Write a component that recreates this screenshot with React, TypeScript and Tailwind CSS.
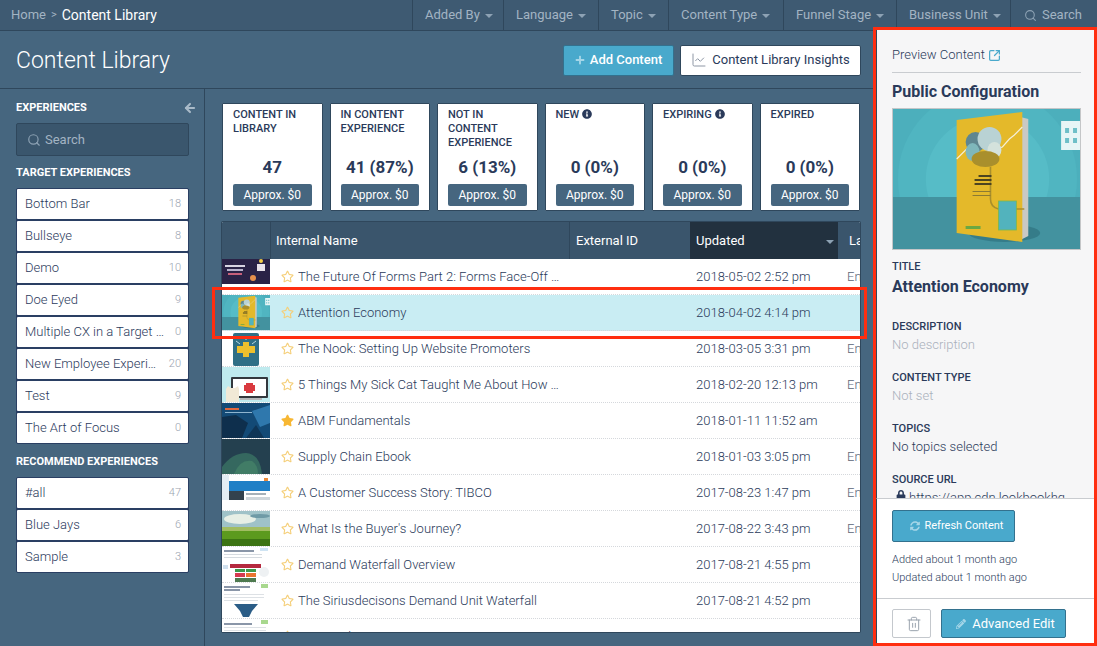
import { FC, ReactNode } from "react";
import { ArrowLeft, ChartLine, Search, SquareArrowOutUpRight, Trash2 } from "lucide-react";
import { FaInfoCircle, FaLock, FaPencilAlt, FaPlus, FaRegStar, FaStar, FaSyncAlt } from "react-icons/fa";

const filters = [
	{ label: "Added By", width: "w-[91px]" },
	{ label: "Language", width: "w-[95px]" },
	{ label: "Topic", width: "w-[70px]" },
	{ label: "Content Type", width: "w-[115px]" },
	{ label: "Funnel Stage", width: "w-[113px]" },
	{ label: "Business Unit", width: "w-[114px]" },
];

const stats = [
	{ title: "Content in Library", value: "47" },
	{ title: "In Content Experience", value: "41 (87%)" },
	{ title: "Not in Content Experience", value: "6 (13%)" },
	{ title: "New", value: "0 (0%)", info: true },
	{ title: "Expiring", value: "0 (0%)", info: true },
	{ title: "Expired", value: "0 (0%)" },
];

const target = [
	{ name: "Bottom Bar", count: 18 },
	{ name: "Bullseye", count: 8 },
	{ name: "Demo", count: 10 },
	{ name: "Doe Eyed", count: 9 },
	{ name: "Multiple CX in a Target Experience", count: 0 },
	{ name: "New Employee Experience", count: 20 },
	{ name: "Test", count: 9 },
	{ name: "The Art of Focus", count: 0 },
];

const recommend = [
	{ name: "#all", count: 47 },
	{ name: "Blue Jays", count: 6 },
	{ name: "Sample", count: 3 },
];

const BookCover: FC<{ className?: string }> = ({ className }) => (
	<svg viewBox="0 0 188 140" preserveAspectRatio="none" className={className}>
		<rect width="188" height="140" fill="#4cafbc" />
		<circle cx="95" cy="70" r="90" fill="#50b5c1" />
		<circle cx="95" cy="70" r="62" fill="#56bcc7" />
		<rect y="88" width="188" height="52" fill="#43929f" />
		<ellipse cx="112" cy="124" rx="36" ry="9" fill="#2f7480" opacity="0.7" />
		<path d="M128 8 L136 10 L136 127 L128 131 Z" fill="#c9c9c4" />
		<path d="M64 11 L130 3 L130 133 L64 124 Z" fill="#e4b92a" />
		<path d="M64 50 L76 38 L84 46 L110 38 L117 30 L122 26 L130 18" fill="none" stroke="#f4efd8" strokeWidth="1.2" />
		<ellipse cx="83" cy="33" rx="10" ry="10" fill="#5f8690" />
		<ellipse cx="97" cy="30" rx="12" ry="12" fill="#b9d2d4" />
		<ellipse cx="80" cy="43" rx="7" ry="9" fill="#7fb7bb" />
		<ellipse cx="102" cy="41" rx="7" ry="8" fill="#d4e2dc" />
		<ellipse cx="93" cy="50" rx="14" ry="8" fill="#a98f2c" />
		<path d="M98 58 V90 Q98 98 106 100 H132" fill="none" stroke="#a98f2c" strokeWidth="1.6" />
		<rect x="86" y="66" width="13" height="2" fill="#4d4420" />
		<rect x="82" y="70" width="17" height="2" fill="#4d4420" />
		<rect x="82" y="74" width="17" height="2" fill="#4d4420" />
		<rect x="80" y="82" width="18" height="1" fill="#8b7a33" />
		<rect x="80" y="86" width="18" height="1" fill="#8b7a33" />
		<rect x="106" y="92" width="18" height="29" fill="#52b3bd" stroke="#79b84e" strokeWidth="0.8" />
		<rect x="73" y="117" width="15" height="3" fill="#6aa842" />
		<rect x="169" y="12" width="19" height="29" fill="#e6f5f6" />
		<rect x="173" y="19" width="4" height="5" fill="#6dbfc8" />
		<rect x="181" y="19" width="4" height="5" fill="#6dbfc8" />
		<rect x="173" y="29" width="4" height="5" fill="#6dbfc8" />
		<rect x="181" y="29" width="4" height="5" fill="#6dbfc8" />
	</svg>
);

const Thumb: FC<{ kind: string }> = ({ kind }) => {
	if (kind === "book") return <BookCover className="h-full w-full blur-[0.3px]" />;
	return (
		<svg viewBox="0 0 48 35" preserveAspectRatio="none" className="h-full w-full blur-[0.3px]">
			{kind === "forms" && (
				<g>
					<rect width="48" height="25" fill="#2a2246" />
					<rect y="25" width="48" height="10" fill="#ffffff" />
					<rect x="3" y="6" width="20" height="2" fill="#d8d4e2" />
					<rect x="5" y="10" width="16" height="2" fill="#b8b2cc" />
					<rect x="6" y="14" width="14" height="2" fill="#c75f7a" />
					<rect x="35" y="5" width="8" height="7" fill="#e9e3ea" />
					<circle cx="39" cy="2" r="2" fill="#f3cd45" />
					<circle cx="31" cy="19" r="3" fill="#e58f4c" />
				</g>
			)}
			{kind === "nook" && (
				<g>
					<rect width="48" height="35" fill="#ffffff" />
					<rect x="11" y="2" width="26" height="33" rx="2" fill="#2f6f86" />
					<rect x="15" y="15" width="18" height="7" fill="#edc02d" />
					<rect x="21" y="11" width="6" height="15" fill="#edc02d" />
					<path d="M14 10 L18 13 M24 5 V9 M34 10 L30 13" stroke="#b9dbe3" strokeWidth="1" />
				</g>
			)}
			{kind === "cat" && (
				<g>
					<rect width="48" height="35" fill="#bfeaee" />
					<rect x="9" y="10" width="37" height="21" rx="1" fill="#33383d" />
					<rect x="11" y="12" width="33" height="17" fill="#ffffff" />
					<rect x="24" y="16" width="7" height="10" fill="#d93a3f" />
					<rect x="22" y="18" width="11" height="6" fill="#d93a3f" />
					<rect x="18" y="31" width="22" height="2" fill="#b5b8ba" />
					<path d="M4 35 V22 L6 19 L9 21 H13 L16 19 L17 22 V35 Z" fill="#f1e9d6" />
				</g>
			)}
			{kind === "abm" && (
				<g>
					<rect width="48" height="35" fill="#134a76" />
					<path d="M0 35 V14 L14 12 L26 20 L20 35 Z" fill="#0e2f4d" />
					<path d="M30 8 L48 2 V20 L38 24 Z" fill="#2f78ad" />
					<path d="M24 35 L34 22 L42 35 Z" fill="#0f3556" />
					<rect x="3" y="5" width="14" height="2" fill="#e0663c" />
					<rect x="3" y="9" width="27" height="1" fill="#8fb5cf" />
				</g>
			)}
			{kind === "supply" && (
				<g>
					<rect width="48" height="35" fill="#24404f" />
					<path d="M0 35 V28 Q10 14 24 14 Q38 15 40 35 Z" fill="#35685f" />
					<path d="M12 35 Q18 20 30 22 Q36 26 36 35 Z" fill="#417c66" />
				</g>
			)}
			{kind === "tibco" && (
				<g>
					<rect width="48" height="35" fill="#ffffff" />
					<rect width="7" height="25" fill="#e3edf4" />
					<rect x="7" y="6" width="41" height="10" fill="#1f7fc6" />
					<rect x="7" y="16" width="15" height="9" fill="#33424e" />
					<rect x="24" y="18" width="20" height="2" fill="#a6b0b8" />
					<rect x="24" y="22" width="24" height="3" fill="#cfd6db" />
					<rect x="42" y="3" width="4" height="3" fill="#ea8a3a" />
				</g>
			)}
			{kind === "field" && (
				<g>
					<rect width="48" height="35" fill="#9fc2c8" />
					<ellipse cx="18" cy="8" rx="16" ry="5" fill="#e7efe6" />
					<ellipse cx="38" cy="5" rx="10" ry="2" fill="#6f9aa6" />
					<rect y="16" width="48" height="19" fill="#5c9a1e" />
					<rect y="16" width="48" height="4" fill="#a2bd62" />
					<rect y="28" width="48" height="7" fill="#3c7413" />
				</g>
			)}
			{kind === "waterfall" && (
				<g>
					<rect width="48" height="35" fill="#ffffff" />
					<rect x="2" y="3" width="30" height="2" fill="#8a96a8" />
					<rect x="2" y="7" width="38" height="1" fill="#d6dbe0" />
					<rect x="2" y="10" width="38" height="1" fill="#d6dbe0" />
					<rect x="8" y="17" width="31" height="4" fill="#b5293f" />
					<rect x="13" y="22" width="10" height="3" fill="#3c9a4c" />
					<rect x="24" y="22" width="10" height="3" fill="#3c9a4c" />
					<rect x="13" y="26" width="10" height="4" fill="#d53a4f" />
					<rect x="24" y="26" width="10" height="4" fill="#e8742f" />
					<rect x="13" y="31" width="21" height="4" fill="#4e7a4f" />
					<rect x="1" y="18" width="5" height="4" fill="#cfe0ee" />
					<circle cx="42" cy="25" r="5" fill="#eef1f3" />
					<rect x="38" y="1" width="8" height="3" fill="#cfe4f3" />
				</g>
			)}
			{kind === "funnel" && (
				<g>
					<rect width="48" height="35" fill="#ffffff" />
					<rect x="2" y="3" width="26" height="2" fill="#8a96a8" />
					<rect x="2" y="6" width="16" height="2" fill="#8a96a8" />
					<rect x="2" y="11" width="40" height="1" fill="#dde1e5" />
					<rect x="2" y="14" width="40" height="1" fill="#dde1e5" />
					<rect x="2" y="17" width="34" height="1" fill="#dde1e5" />
					<path d="M12 21 H36 L30 28 L27 34 H21 L18 28 Z" fill="#2b5d87" />
					<rect x="39" y="1" width="7" height="4" fill="#a8d88e" />
				</g>
			)}
			{kind === "screen" && (
				<g>
					<rect width="48" height="35" fill="#ffffff" />
					<rect x="2" y="4" width="28" height="2" fill="#8a96a8" />
					<rect x="2" y="8" width="42" height="1" fill="#dde1e5" />
					<rect x="2" y="11" width="42" height="1" fill="#dde1e5" />
					<rect x="39" y="1" width="7" height="4" fill="#a8d88e" />
				</g>
			)}
		</svg>
	);
};

const rows = [
	{ thumb: "forms", title: "The Future Of Forms Part 2: Forms Face-Off With Experts", date: "2018-05-02 2:52 pm", lang: true },
	{ thumb: "book", title: "Attention Economy", date: "2018-04-02 4:14 pm", selected: true },
	{ thumb: "nook", title: "The Nook: Setting Up Website Promoters", date: "2018-03-05 3:31 pm", lang: true },
	{ thumb: "cat", title: "5 Things My Sick Cat Taught Me About How To Market", date: "2018-02-20 12:13 pm", lang: true },
	{ thumb: "abm", title: "ABM Fundamentals", date: "2018-01-11 11:52 am", starred: true },
	{ thumb: "supply", title: "Supply Chain Ebook", date: "2018-01-03 3:05 pm", lang: true },
	{ thumb: "tibco", title: "A Customer Success Story: TIBCO", date: "2017-08-23 1:47 pm", lang: true },
	{ thumb: "field", title: "What Is the Buyer's Journey?", date: "2017-08-22 3:43 pm", lang: true },
	{ thumb: "waterfall", title: "Demand Waterfall Overview", date: "2017-08-21 4:55 pm" },
	{ thumb: "funnel", title: "The Siriusdecisons Demand Unit Waterfall", date: "2017-08-21 4:52 pm" },
	{ thumb: "screen", title: "Screen Shot 2017-08-21 At 1.52.50 PM", date: "2017-08-21 4:51 pm" },
];

const Caret = () => <span className="ml-[5px] inline-block h-0 w-0 translate-y-[1px] border-x-[4px] border-t-[4px] border-x-transparent border-t-[#8da2b4]" />;

const SideList: FC<{ items: { name: string; count: number }[] }> = ({ items }) => (
	<div className="flex flex-col gap-[2px] rounded-[2px] border border-[#2a3f63] bg-[#2a3f63]">
		{items.map((item) => (
			<div key={item.name} className="flex h-[30px] items-center justify-between rounded-[1px] bg-white pl-[8px] pr-[7px] text-[13px] font-light text-[#2b3a5c]">
				<span className="truncate">{item.name}</span>
				<span className="ml-2 text-[11px] text-[#9aa3b0]">{item.count}</span>
			</div>
		))}
	</div>
);

const Field: FC<{ label: string; children: ReactNode }> = ({ label, children }) => (
	<div className="mb-[15px]">
		<div className="h-[16px] text-[11px] font-medium uppercase leading-[16px] text-[#2a3a5a]">{label}</div>
		{children}
	</div>
);

export default function App() {
	return (
		<div className="relative flex h-[646px] w-[1097px] flex-col overflow-hidden bg-[#46667f] font-['Roboto',sans-serif]">
			<div className="flex h-[31px] shrink-0 items-center border-b border-[#2f475c] bg-[#3e5a72] text-[13px] text-[#a3b4c3]">
				<div className="flex items-center pl-[11px]">
					<span>Home</span>
					<span className="mx-[5px] text-[11px]">&gt;</span>
					<span className="text-[14px] text-white">Content Library</span>
				</div>
				<div className="ml-auto flex h-full">
					{filters.map((f) => (
						<div key={f.label} className={`flex items-center border-l border-[#2f475c] pl-[12px] ${f.width}`}>
							{f.label}
							<Caret />
						</div>
					))}
					<div className="flex w-[87px] items-center gap-[5px] border-l border-[#2f475c] pl-[13px]">
						<Search size={13} className="text-[#8da2b4]" />
						Search
					</div>
				</div>
			</div>

			<div className="flex h-[58px] shrink-0 items-center border-b border-[#2f475c] pl-[16px] pr-[236px]">
				<h1 className="mt-[3px] text-[23px] font-light text-white">Content Library</h1>
				<div className="ml-auto mt-[1px] flex gap-[6px]">
					<button className="flex h-[31px] w-[111px] items-center justify-center gap-[5px] rounded-[2px] border border-[#33718e] bg-[#49a9cc] text-[13px] font-medium text-white">
						<FaPlus size={10} className="text-[#a5d6e8]" />
						Add Content
					</button>
					<button className="flex h-[31px] w-[181px] items-center justify-center gap-[5px] rounded-[2px] border border-[#2f475c] bg-white text-[13px] text-[#2a3a5a]">
						<ChartLine size={16} strokeWidth={1.5} className="text-[#8e97a5]" />
						Content Library Insights
					</button>
				</div>
			</div>

			<div className="flex min-h-0 flex-1">
				<aside className="w-[205px] shrink-0 border-r border-[#2f475c] pl-[16px] pr-[15px] pt-[11px]">
					<div className="flex h-[16px] items-center justify-between">
						<span className="text-[11px] font-bold uppercase text-white">Experiences</span>
						<ArrowLeft size={14} strokeWidth={3.5} className="-mr-[8px] text-[#a9bac8]" />
					</div>
					<div className="mt-[7px] flex h-[33px] items-center gap-[4px] rounded-[2px] border border-[#2f475c] bg-[#3a566d] pl-[10px] text-[13px] text-[#a3b4c3]">
						<Search size={14} className="text-[#8da2b4]" />
						Search
					</div>
					<div className="mb-[7px] mt-[9px] h-[16px] text-[11px] font-bold uppercase leading-[16px] text-white">Target Experiences</div>
					<SideList items={target} />
					<div className="mb-[7px] mt-[10px] h-[16px] text-[11px] font-bold uppercase leading-[16px] text-white">Recommend Experiences</div>
					<SideList items={recommend} />
				</aside>

				<main className="w-[655px] shrink-0 pl-[17px] pt-[14px]">
					<div className="flex h-[108px] gap-[7px]">
						{stats.map((s) => (
							<div key={s.title} className="flex min-w-0 flex-1 flex-col rounded-[1px] border border-[#2f475c] bg-white px-[10px] pb-[4px] pt-[4px]">
								<div className="h-[44px] text-[11px] font-medium uppercase leading-[14px] text-[#2a3a5a]">
									{s.title}
									{s.info && <FaInfoCircle size={10} className="ml-[3px] inline-block align-[-1px]" />}
								</div>
								<div className="mt-auto whitespace-nowrap text-center text-[17px] font-bold leading-[24px] text-[#2a3a5a]">{s.value}</div>
								<div className="mt-[5px] flex h-[22px] items-center justify-center rounded-[2px] bg-[#46667f] text-[12px] font-normal text-white">Approx. $0</div>
							</div>
						))}
					</div>

					<div className="mt-[11px] h-[410px] overflow-hidden rounded-[1px] bg-white text-[13px] font-light text-[#2a3a5a] shadow-[0_0_0_1px_#2f475c]">
						<div className="flex h-[37px] bg-[#3a556c] text-white">
							<div className="w-[49px] shrink-0 border-r border-[#2f475c]" />
							<div className="flex w-[299px] shrink-0 items-center border-r border-[#2f475c] pl-[5px] font-normal">Internal Name</div>
							<div className="flex w-[120px] shrink-0 items-center pl-[6px] font-normal">External ID</div>
							<div className="flex w-[148px] shrink-0 items-center justify-between bg-[#22313f] pl-[6px] pr-[4px] font-normal">
								Updated
								<Caret />
							</div>
							<div className="flex flex-1 items-center overflow-hidden pl-[11px] font-normal">Language</div>
						</div>
						{rows.map((r) => (
							<div key={r.title} className={`flex h-[36px] items-stretch border-b border-dotted border-[#d5d8dc] ${r.selected ? "bg-[#c9edf3]" : "bg-white"}`}>
								<div className="h-[35px] w-[48px] shrink-0 overflow-hidden">
									<Thumb kind={r.thumb} />
								</div>
								<div className="flex w-[300px] shrink-0 items-center pl-[11px]">
									{r.starred ? <FaStar size={13} className="shrink-0 text-[#f7b733]" /> : <FaRegStar size={13} className="shrink-0 text-[#f5cf79]" />}
									<span className="ml-[4px] w-[264px] truncate">{r.title}</span>
								</div>
								<div className="w-[120px] shrink-0" />
								<div className="flex w-[148px] shrink-0 items-center pl-[6px]">{r.date}</div>
								<div className="flex flex-1 items-center overflow-hidden whitespace-nowrap pl-[9px] text-[#5a6577]">{r.lang ? "English" : ""}</div>
							</div>
						))}
					</div>
				</main>
			</div>

			{/* preview drawer lies over the page */}
			<div className="absolute left-[873px] top-[27px] flex h-[619px] w-[224px] flex-col border-[3px] border-[#ff2e10] bg-[#f6f6f7] text-[#2a3a5a]">
				<div className="min-h-0 flex-1 overflow-hidden border-l border-[#2f475c] pl-[15px] pr-[13px] pt-[15px]">
					<div className="flex h-[20px] items-center gap-[3px] text-[13px] font-light">
						Preview Content
						<SquareArrowOutUpRight size={13} strokeWidth={2.25} className="text-[#49a9cc]" />
					</div>
					<div className="mt-[7px] border-t border-[#c9ccd0]" />
					<div className="mt-[9px] h-[20px] text-[16px] font-bold leading-[20px]">Public Configuration</div>
					<div className="mt-[6px] h-[142px] w-[189px] border border-[#c4c6c8]">
						<BookCover className="h-full w-full blur-[0.5px]" />
					</div>
					<div className="mt-[9px]">
						<div className="h-[16px] text-[11px] font-medium uppercase leading-[16px]">Title</div>
						<div className="mb-[20px] h-[24px] text-[16px] font-bold leading-[24px]">Attention Economy</div>
						<Field label="Description">
							<div className="h-[20px] text-[13px] font-light leading-[20px] text-[#aab1bc]">No description</div>
						</Field>
						<Field label="Content Type">
							<div className="h-[20px] text-[13px] font-light leading-[20px] text-[#aab1bc]">Not set</div>
						</Field>
						<Field label="Topics">
							<div className="h-[20px] text-[13px] font-light leading-[20px]">No topics selected</div>
						</Field>
						<Field label="Source URL">
							<div className="flex h-[20px] items-center gap-[3px] whitespace-nowrap pl-[4px] text-[13px] font-light leading-[20px]">
								<FaLock size={10} className="-translate-y-[3px]" />
								https://app.cdn.lookbookhq
							</div>
						</Field>
					</div>
				</div>
				<div className="shrink-0 border-l border-t border-l-[#2f475c] border-t-[#c9ccd0] bg-white">
					<div className="px-[15px] pt-[11px]">
						<button className="flex h-[32px] w-[123px] items-center justify-center gap-[5px] rounded-[2px] border border-[#33718e] bg-[#49a9cc] pl-[6px] text-[11px] font-normal text-white">
							<FaSyncAlt size={10} className="text-[#a5d6e8]" />
							Refresh Content
						</button>
						<div className="mt-[9px] text-[11px] font-light leading-[18px]">
							<div>Added about 1 month ago</div>
							<div>Updated about 1 month ago</div>
						</div>
					</div>
					<div className="mt-[11px] flex gap-[10px] border-t border-[#c9ccd0] pb-[5px] pl-[15px] pt-[10px]">
						<button className="flex h-[29px] w-[39px] items-center justify-center rounded-[2px] border border-[#c4c8cd] bg-white pl-[4px]">
							<Trash2 size={16} strokeWidth={1.5} className="text-[#9aa3ae]" />
						</button>
						<button className="flex h-[29px] w-[125px] items-center justify-center gap-[6px] rounded-[2px] border border-[#33718e] bg-[#49a9cc] pl-[4px] text-[13px] font-normal text-white">
							<FaPencilAlt size={10} className="text-[#a5d6e8]" />
							Advanced Edit
						</button>
					</div>
				</div>
			</div>

			{/* annotation around selected row */}
			<div className="absolute left-[212px] top-[287px] h-[52px] w-[655px] border-[3px] border-[#ff2e10]" />
		</div>
	);
}
